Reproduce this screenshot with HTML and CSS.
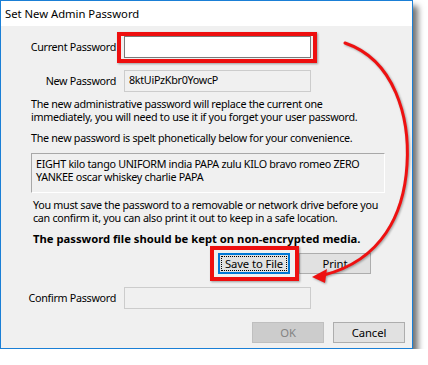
FILE: index.html
```html
<!DOCTYPE html>
<html>
<head>
<meta charset="utf-8">
<link rel="stylesheet" href="styles.css">
</head>
<body>
<div class="window">
  <div class="titlebar">Set New Admin Password</div>
  <div class="client">
    <div class="form-row first">
      <label class="lbl">Current Password</label>
      <div class="hl-wrap">
        <div class="field field-active"></div>
        <div class="hl hl-field"></div>
      </div>
    </div>
    <div class="form-row second">
      <label class="lbl">New Password</label>
      <div class="field field-ro">8ktUiPzKbr0YowcP</div>
    </div>
    <p class="txt p1">The new administrative password will replace the current one<br>immediately, you will need to use it if you forget your user password.</p>
    <p class="txt p2">The new password is spelt phonetically below for your convenience.</p>
    <div class="phon">EIGHT kilo tango UNIFORM india PAPA zulu KILO bravo romeo ZERO<br>YANKEE oscar whiskey charlie PAPA</div>
    <p class="txt p3">You must save the password to a removable or network drive before you<br>can confirm it, you can also print it out to keep in a safe location.</p>
    <p class="txt bold">The password file should be kept on non-encrypted media.</p>
    <div class="btn-row save-row">
      <div class="hl-wrap">
        <button class="btn btn-focus">Save to File</button>
        <div class="hl hl-btn"></div>
      </div>
      <button class="btn">Print</button>
    </div>
    <div class="form-row third">
      <label class="lbl">Confirm Password</label>
      <div class="field field-ro conf"></div>
    </div>
    <div class="btn-row ok-row">
      <button class="btn btn-disabled">OK</button>
      <button class="btn">Cancel</button>
    </div>
  </div>
  <svg class="arrow" width="428" height="365" viewBox="0 0 428 365">
    <path d="M345,43 C395,60 410,118 407,165 C404,214 382,260 324,275" fill="none" stroke="#ee1111" stroke-width="3" stroke-linecap="round"/>
    <polygon points="312,277 327,269 325,283" fill="#ee1111"/>
  </svg>
</div>
</body>
</html>
```
FILE: styles.css
```css
* { box-sizing: border-box; }
html, body { margin: 0; padding: 0; background: #ffffff; }
body {
  font-family: "Noto Sans", "Open Sans", sans-serif;
  font-size: 10.75px;
  letter-spacing: -0.3px;
  color: #000;
}
.window {
  position: relative;
  width: 413px;
  height: 349px;
  border: 1px solid #1a7fd6;
  background: #f0f0f0;
  box-shadow: 5px 6px 6px rgba(0,0,0,0.55);
  display: flex;
  flex-direction: column;
}
.titlebar {
  height: 25px;
  line-height: 25px;
  background: #fff;
  padding-left: 4px;
  white-space: nowrap;
  font-size: 11.25px;
  letter-spacing: 0;
}
.client {
  flex: 1;
  display: flex;
  flex-direction: column;
  padding: 10px 0 0 0;
  white-space: nowrap;
}
.form-row {
  display: grid;
  grid-template-columns: 115px 187px;
  column-gap: 8px;
  align-items: center;
}
.lbl { text-align: right; line-height: 14px; }
.second { margin-top: 12px; }
.field { height: 22px; border: 1px solid #7a7a7a; background: #fff; }
.field-ro {
  border: 1px solid #cccccc;
  background: #f0f0f0;
  padding: 0 0 0 4px;
  line-height: 19px;
}
.hl-wrap { position: relative; }
.hl {
  position: absolute;
  border: 4px solid #ee0f0f;
  box-shadow: 1px 1px 2px rgba(0,0,0,0.35);
  pointer-events: none;
}
.hl-field { left: -7px; right: -6px; top: -4px; bottom: -5px; }
.hl-btn { left: -8px; right: -9px; top: -7px; bottom: -7px; }
.txt { margin: 0; line-height: 13px; padding-left: 30px; }
.p1 { margin-top: 6px; }
.p2 { margin-top: 8px; }
.phon {
  margin: 8px 0 0 30px;
  width: 354px;
  height: 40px;
  border-top: 1px solid #a8a8a8;
  border-left: 1px solid #a8a8a8;
  border-right: 1px solid #ffffff;
  border-bottom: 1px solid #ffffff;
  padding: 4px 0 0 4px;
  line-height: 13px;
  overflow: hidden;
}
.p3 { margin-top: 6px; padding-left: 32px; }
.bold { margin-top: 7px; padding-left: 32px; font-weight: bold; font-size: 11.25px; letter-spacing: 0; }
.btn-row { display: flex; justify-content: flex-end; gap: 9px; }
.save-row { margin-top: 8px; padding-right: 41px; }
.ok-row { margin-top: 13px; padding-right: 7px; }
.third { margin-top: 13px; }
.conf { height: 22px; }
.btn {
  width: 72px;
  height: 21px;
  border: 1px solid #adadad;
  background: #e1e1e1;
  font-family: inherit;
  font-size: 11.25px;
  letter-spacing: -0.1px;
  color: #000;
  padding: 0;
  margin: 0;
  line-height: 18px;
}
.btn-focus {
  position: relative;
  border: 2px solid #0078d7;
}
.btn-focus::after {
  content: "";
  position: absolute;
  left: 1px; top: 1px; right: 1px; bottom: 1px;
  border: 1px dotted #000;
}
.btn-disabled { background: #cccccc; border-color: #bfbfbf; color: #838383; }
.arrow {
  position: absolute;
  left: -1px; top: -1px;
  pointer-events: none;
  filter: drop-shadow(1px 1px 1px rgba(0,0,0,0.35));
}
```
